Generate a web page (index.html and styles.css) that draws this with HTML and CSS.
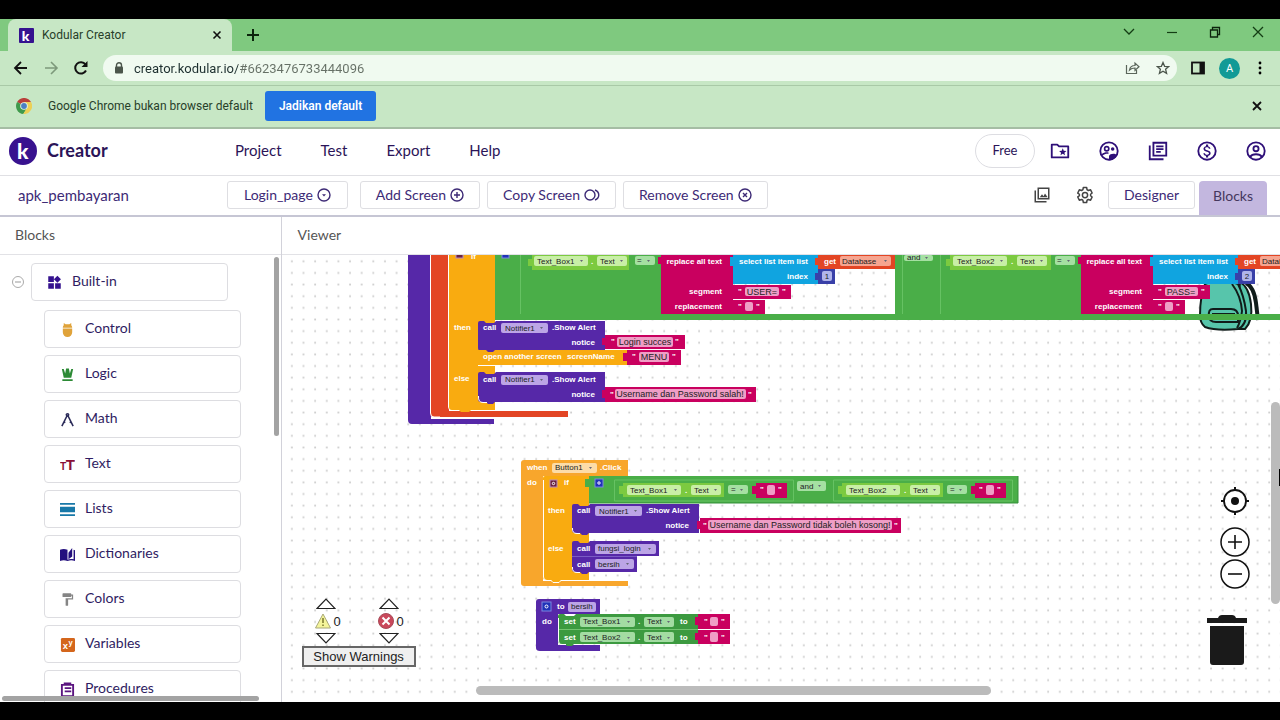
FILE: index.html
```html
<!DOCTYPE html>
<html lang="id">
<head>
    <meta charset="UTF-8">
    <meta name="viewport" content="width=device-width, initial-scale=1.0">
    <title>Kodular Creator</title>
    <link rel="stylesheet" href="styles.css">
</head>
<body>
    <!-- Browser chrome -->
    <header class="browser">
        <div class="tab-strip">
            <div class="tab">
                <svg class="favicon" viewBox="0 0 16 16"><rect width="16" height="16" rx="1" fill="#35128f"/><text x="3" y="14" class="logo-k" font-size="15">k</text></svg>
                <span class="tab-title">Kodular Creator</span>
                <button class="plain" aria-label="Close tab"><svg width="10" height="10" viewBox="0 0 10 10"><path d="M1.5 1.5l7 7m0-7l-7 7" stroke="#111" stroke-width="1.6"/></svg></button>
            </div>
            <button class="plain new-tab" aria-label="New tab"><svg width="12" height="12" viewBox="0 0 12 12"><path d="M6 0v12M0 6h12" stroke="#0b240b" stroke-width="2"/></svg></button>
            <div class="window-buttons">
                <button class="plain" aria-label="Search tabs"><svg width="12" height="12" viewBox="0 0 12 12"><path d="M1 3l5 5 5-5" fill="none" stroke="#143d14" stroke-width="1.3"/></svg></button>
                <button class="plain" aria-label="Minimize"><svg width="12" height="12" viewBox="0 0 12 12"><path d="M1 6.5h10" stroke="#143d14" stroke-width="1.2"/></svg></button>
                <button class="plain" aria-label="Restore"><svg width="12" height="12" viewBox="0 0 12 12"><path d="M1.500 4h7v7h-7zM3.500 4V1.500h7v7H8.500" fill="none" stroke="#0c240c" stroke-width="1.300"/></svg></button>
                <button class="plain" aria-label="Close"><svg width="12" height="12" viewBox="0 0 12 12"><path d="M1 1l10 10M11 1L1 11" stroke="#143d14" stroke-width="1.300"/></svg></button>
            </div>
        </div>
        <div class="toolbar">
            <button class="plain" aria-label="Back"><svg width="16" height="16" viewBox="0 0 16 16"><path d="M14 8H2.500M8 2L2 8l6 6" fill="none" stroke="#111" stroke-width="1.800"/></svg></button>
            <button class="plain" aria-label="Forward"><svg width="16" height="16" viewBox="0 0 16 16"><path d="M2 8h11.500M8 2l6 6-6 6" fill="none" stroke="#7d997b" stroke-width="1.600"/></svg></button>
            <button class="plain" aria-label="Reload"><svg width="16" height="16" viewBox="0 0 16 16"><path d="M13 10.500A5.700 5.700 0 1 1 12.500 4.500" fill="none" stroke="#111" stroke-width="2"/><path d="M14.500 1v6h-6z" fill="#111"/></svg></button>
            <div class="address-bar">
                <svg width="10" height="12" viewBox="0 0 10 12"><path d="M2.500 5V3.300a2.500 2.500 0 0 1 5 0V5" fill="none" stroke="#4b554b" stroke-width="1.400"/><rect x="1" y="4.500" width="8" height="7" rx="1" fill="#4b554b"/></svg>
                <input type="text" aria-label="Address" value="creator.kodular.io/#6623476733444096">
                <button class="plain" aria-label="Share"><svg width="16" height="14" viewBox="0 0 16 14"><path d="M1.500 4v8.500h10V9M4.500 9C5 6 7 4.500 10 4.500V2l4 3.700-4 3.600V7C7.500 7 6 7.500 4.500 9z" fill="none" stroke="#5b665b" stroke-width="1.200"/></svg></button>
                <button class="plain" aria-label="Bookmark"><svg width="14" height="14" viewBox="0 0 14 14"><path d="M7 1.500l1.600 3.800 4.100.3-3.100 2.700 1 4L7 10.200l-3.600 2.100 1-4L1.300 5.600l4.100-.3z" fill="none" stroke="#4b554b" stroke-width="1.300"/></svg></button>
            </div>
            <button class="plain" aria-label="Side panel"><svg width="14" height="14" viewBox="0 0 14 14"><rect x="1" y="1.500" width="12" height="11" fill="none" stroke="#111" stroke-width="1.800"/><path d="M8.500 1.500H13v11H8.500z" fill="#111"/></svg></button>
            <button class="plain avatar" aria-label="Profile">A</button>
            <button class="plain" aria-label="Menu"><svg width="4" height="14" viewBox="0 0 4 14"><circle cx="2" cy="2" r="1.400"/><circle cx="2" cy="7" r="1.400"/><circle cx="2" cy="12" r="1.400"/></svg></button>
        </div>
        <div class="infobar">
            <svg width="16" height="16" viewBox="0 0 16 16"><path d="M8 8L1.100 4A8 8 0 0 1 15 4z" fill="#b9403a"/><path d="M8 8L1.100 4a8 8 0 0 0 6.200 12l4-6z" fill="#3f9a4c"/><path d="M8 4h7a8 8 0 0 1-7.700 12L11.500 9z" fill="#ecd055"/><circle cx="8" cy="8" r="3.800" fill="#e8f3e6"/><circle cx="8" cy="8" r="2.900" fill="#4a80c4"/></svg>
            <span>Google Chrome bukan browser default</span>
            <button class="make-default">Jadikan default</button>
            <button class="plain dismiss" aria-label="Dismiss"><svg width="10" height="10" viewBox="0 0 10 10"><path d="M1 1l8 8m0-8l-8 8" stroke="#111" stroke-width="1.800"/></svg></button>
        </div>
    </header>

    <!-- Creator top bar -->
    <div class="top-bar">
        <svg class="logo" width="28" height="28" viewBox="0 0 28 28"><circle cx="14" cy="14" r="14" fill="#38128f"/><text x="8" y="22" class="logo-k" font-size="21">k</text></svg>
        <h1>Creator</h1>
        <nav class="menu">
            <a href="#project">Project</a>
            <a href="#test">Test</a>
            <a href="#export">Export</a>
            <a href="#help">Help</a>
        </nav>
        <div class="account">
            <button class="pill">Free</button>
            <button class="plain" aria-label="My projects"><svg width="22" height="22" viewBox="0 0 24 24"><path d="M3 5h6l2 2h10v12H3z" fill="none" stroke="#2e0f78" stroke-width="2" stroke-linejoin="round"/><path d="M15 9l1.100 2.600 2.900.3-2.200 1.900.7 2.800-2.500-1.500-2.500 1.500.7-2.800-2.200-1.900 2.900-.3z" fill="#2e0f78"/></svg></button>
            <button class="plain" aria-label="Community"><svg width="22" height="22" viewBox="0 0 24 24"><circle cx="12" cy="12" r="9.500" fill="none" stroke="#2e0f78" stroke-width="2"/><circle cx="9.500" cy="9.500" r="2.300" fill="none" stroke="#2e0f78" stroke-width="1.800"/><circle cx="16" cy="9.800" r="1.900" fill="#2e0f78"/><path d="M4 15.500c2-2 5-2.500 7.500-2v1.500c-2.500-.3-4.500.2-6.500 2zM12 22v-4.500c1-2.500 6-3.500 8.500-1-1 3-4 5.500-8.500 5.500z" fill="#2e0f78"/></svg></button>
            <button class="plain" aria-label="Documentation"><svg width="22" height="22" viewBox="0 0 24 24"><path d="M7 3h14v14H7zM3 6v15h15M10 7h8M10 10h8M10 13h5" fill="none" stroke="#2e0f78" stroke-width="2"/></svg></button>
            <button class="plain" aria-label="Earnings"><svg width="22" height="22" viewBox="0 0 24 24"><circle cx="12" cy="12" r="9.500" fill="none" stroke="#2e0f78" stroke-width="2"/><path d="M12.310 11.140c-1.770-.45-2.340-.94-2.340-1.670 0-.84.79-1.430 2.100-1.430 1.380 0 1.900.66 1.940 1.640h1.710c-.05-1.340-.87-2.570-2.490-2.970V5H10.900v1.690c-1.510.32-2.720 1.300-2.720 2.810 0 1.790 1.490 2.690 3.660 3.210 1.950.46 2.340 1.150 2.340 1.870 0 .53-.39 1.390-2.100 1.390-1.600 0-2.230-.72-2.320-1.640H8.040c.1 1.700 1.360 2.660 2.860 2.970V19h2.340v-1.670c1.520-.29 2.720-1.160 2.730-2.770-.01-2.200-1.900-2.960-3.660-3.420z" fill="#2e0f78"/></svg></button>
            <button class="plain" aria-label="Account"><svg width="22" height="22" viewBox="0 0 24 24"><circle cx="12" cy="12" r="9.500" fill="none" stroke="#2e0f78" stroke-width="2"/><circle cx="12" cy="9.500" r="2.800" fill="none" stroke="#2e0f78" stroke-width="2"/><path d="M5.500 18.500c2.500-4 10.500-4 13 0" fill="none" stroke="#2e0f78" stroke-width="2"/></svg></button>
        </div>
    </div>

    <!-- Project bar -->
    <div class="project-bar">
        <span class="project-name">apk_pembayaran</span>
        <div class="screen-actions">
            <button class="outline">Login_page <svg width="14" height="14" viewBox="0 0 14 14"><circle cx="7" cy="7" r="6"/><path d="M5 6.300h4L7 8.500z" class="solid"/></svg></button>
            <button class="outline">Add Screen <svg width="14" height="14" viewBox="0 0 14 14"><circle cx="7" cy="7" r="6"/><path d="M7 4v6M4 7h6"/></svg></button>
            <button class="outline">Copy Screen <svg width="16" height="14" viewBox="0 0 16 14"><circle cx="6" cy="7" r="5"/><path d="M11 2c5 2 5 8 0 10"/></svg></button>
            <button class="outline">Remove Screen <svg width="14" height="14" viewBox="0 0 14 14"><circle cx="7" cy="7" r="6"/><path d="M5 5l4 4m0-4L5 9"/></svg></button>
        </div>
        <div class="view-actions">
            <button class="plain" aria-label="Assets"><svg width="18" height="18" viewBox="0 0 24 24"><path d="M7 3h14v14H7zM3 6v15h15" fill="none" stroke="#444" stroke-width="2"/><path d="M9 15l3-4 2 2.500 2-3.500 3.500 5z" fill="#444"/></svg></button>
            <button class="plain" aria-label="Settings"><svg width="18" height="18" viewBox="0 0 24 24"><path d="M19.430 12.980c.04-.32.07-.64.07-.98s-.03-.66-.07-.98l2.110-1.650-2.100-4.300-3 .98c-.52-.4-1.080-.73-1.690-.98L14.200 2H9.800l-.67 3.070c-.61.25-1.170.59-1.690.98l-3-.98-2.100 4.300 2.230 1.650c-.04.32-.07.65-.07.98s.03.66.07.98l-2.230 1.650 2.100 4.300 3-.98c.52.4 1.080.73 1.690.98L9.800 22h4.400l.55-3.070c.61-.25 1.170-.59 1.690-.98l3 .98 2.100-4.300z" fill="none" stroke="#444" stroke-width="2" stroke-linejoin="round"/><circle cx="12" cy="12" r="3.500" fill="none" stroke="#444" stroke-width="2"/></svg></button>
            <button class="outline">Designer</button>
            <button class="view-tab">Blocks</button>
        </div>
    </div>

    <main class="workbench">
        <aside class="palette">
            <h2>Blocks</h2>
            <div class="tree">
                <div class="tree-root">
                    <button class="plain" aria-label="Collapse"><svg width="12" height="12" viewBox="0 0 12 12"><path d="M3 6h6" stroke="#999"/><circle cx="6" cy="6" r="5.500" fill="none" stroke="#aaa"/></svg></button>
                    <button class="drawer"><svg viewBox="0 0 24 24" fill="#35128f"><path d="M13 13v9h9v-9h-9zM2 22h9v-9H2v9zM2 2v9h9V2H2zm14.660-1L11 6.800 16.660 12.500l5.660-5.660L16.660 1z"/></svg>Built-in</button>
                </div>
                <button class="drawer"><svg viewBox="0 0 16 16" fill="#e0a33a"><path d="M3 7h10v4a5 5 0 0 1-10 0zM3 6c0-1 .5-2 1-2.500V1l2 1.500h4L12 1v2.500c.5.500 1 1.500 1 2.500z"/></svg>Control</button>
                <button class="drawer"><svg viewBox="0 0 16 16" fill="#2c8a35"><path d="M2 2h2l1.500 5L6.500 1.500h3L10.500 7 12 2h2l-2 9.500H4zM2.500 13h11v2h-11z"/></svg>Logic</button>
                <button class="drawer"><svg viewBox="0 0 16 16" fill="none" stroke="#2c2c5a" stroke-width="1.700"><path d="M2 15L7.500 4M14 15L8.500 4M4.500 10.500l1 1m6-1l-1 1"/><circle cx="8" cy="3" r="1.200"/></svg>Math</button>
                <button class="drawer"><svg viewBox="0 0 16 16" fill="#8a1038" class="type-icon"><text x="0" y="14" font-size="11">T</text><text x="6" y="14" font-size="16">T</text></svg>Text</button>
                <button class="drawer"><svg viewBox="0 0 16 16" fill="#1878a8"><path d="M0 1h16v2H0zM0 5h16v6H0zM0 13h16v2H0z"/></svg>Lists</button>
                <button class="drawer"><svg viewBox="0 0 16 16" fill="#24107e"><path d="M0 3c3-1.300 5-1.300 8 0v12c-3-1.300-5-1.300-8 0zM9 6l4-5v9l-4 3zM14.500 3l1.500.5V15c-3-1.300-5-1.300-8 0v-1.500c2-1 4-1 6.500-.5z"/></svg>Dictionaries</button>
                <button class="drawer"><svg viewBox="0 0 24 24" fill="#858585"><path d="M18 4V3c0-.55-.45-1-1-1H5c-.55 0-1 .45-1 1v4c0 .55.450 1 1 1h12c.55 0 1-.45 1-1V6h1v4H9v11c0 .55.450 1 1 1h2c.55 0 1-.45 1-1v-9h8V4h-3z"/></svg>Colors</button>
                <button class="drawer"><svg viewBox="0 0 16 16" class="type-icon"><rect x="1" y="1" width="15" height="15" rx="1.500" fill="#d4661c"/><text x="3" y="13" font-size="10" fill="#fff">x</text><text x="9" y="8" font-size="8" fill="#fff">y</text></svg>Variables</button>
                <button class="drawer"><svg viewBox="0 0 16 16" fill="none" stroke="#5b1480" stroke-width="2"><path d="M2 3h12v12H2zM5 6.500h7M5 10h7M5 3V1.500h6V3"/></svg>Procedures</button>
            </div>
            <div class="scroll-v"></div>
            <div class="scroll-h"></div>
        </aside>

        <section class="viewer">
            <h2>Viewer</h2>
            <div class="workspace">
                <svg class="canvas">
                    <defs>
                        <pattern id="grid" x="4" y="0" width="11.635" height="11.635" patternUnits="userSpaceOnUse"><rect x="5" y="5.400" width="1.800" height="1.800" fill="#cdcdcd"/></pattern>
                    </defs>
                    <rect width="100%" height="100%" fill="url(#grid)"/>

                    <g transform="translate(-282 -255)">
                        <!-- backpack -->
                        <g stroke="#101c1a" stroke-width="2" fill="#57c5ab">
                            <path d="M1246 283q8 4 10 20l2 17" fill="none" stroke-width="4"/>
                            <path d="M1240 282q9 5 11 22t-6 25h-9z"/>
                            <path d="M1205 284q15-7 33 0 6 12 8 27 1 14-8 18-22 2-33-2-5-4-5-12 0-18 5-31z"/>
                            <path d="M1232 284q9 12 10 27-1 10-5 17" fill="none"/>
                            <path d="M1209 316q-1-7 4-7h18q7 0 7 7v6h-22q-7 0-7-6zM1212 314h23" fill="none"/>
                        </g>

                        <!-- fungsi_login procedure -->
                        <path class="proc" d="M408 255H431V419H494V424H412Q408 424 408 420Z"/>
                        <path class="ctl-red" d="M430 255H449V411H568V417H434Q430 417 430 413Z"/>
                        <path class="edge" d="M430.500 255V413Q430.500 417 434 417H440M448.500 255V407Q448.500 410.500 452 410.500H458"/>
                        <path class="amber" d="M449 255H495V410H471L469 412H461L459 410H452Q449 410 449 407Z"/>
                        <path class="green" d="M495 255H661V314H895V255H1081V314H1280V320H495Z"/>
                        <path class="seam" d="M520.500 255V314M902.500 255V314M940.500 255V314"/>
                        <rect class="mutator" x="456" y="251" width="7" height="7"/>
                        <rect class="mutator blue" x="502" y="251" width="7" height="7"/>
                        <text class="label" x="471" y="259">if</text>

                        <path class="lime" d="M532 255H629V270H532V266H528V259H532Z"/>
                        <rect class="lime-field" x="534" y="256" width="54" height="10"/>
                        <rect class="lime-field" x="597" y="256" width="30" height="10"/>
                        <rect class="green-field" x="635" y="256" width="20" height="9"/>
                        <text class="field" x="537" y="264">Text_Box1</text><path class="arrow" d="M580 260h3l-1.500 2z"/>
                        <text class="label" x="591" y="264">.</text>
                        <text class="field" x="600" y="264">Text</text><path class="arrow" d="M620 260h3l-1.500 2z"/>
                        <text class="field" x="637" y="263">=</text><path class="arrow" d="M647 260h3l-1.500 2z"/>
                        <path class="pink" d="M661 255H733V314H661V264H658V257H661Z"/>
                        <text class="label end" x="722" y="264">replace all text</text>
                        <text class="label end" x="722" y="294">segment</text>
                        <text class="label end" x="722" y="309">replacement</text>
                        <path class="cyan" d="M733 255H818V284H733V266H730V257H733Z"/>
                        <text class="label" x="739" y="264">select list item</text>
                        <text class="label end" x="808" y="264">list</text>
                        <text class="label end" x="808" y="279">index</text>
                        <path class="ctl-red" d="M818 255H895V269H818V265H815V258H818Z"/>
                        <text class="label" x="824" y="264">get</text>
                        <rect class="red-field" x="840" y="256" width="51" height="10"/>
                        <text class="field" x="842" y="264">Database</text><path class="arrow" d="M884 260h3l-1.500 2z"/>
                        <path class="navy" d="M818 269H835V284H818V280H815V273H818Z"/>
                        <rect class="navy-field" x="822" y="271" width="10" height="10"/><text class="field mid" x="827" y="279">1</text>
                        <rect class="pink" x="733" y="285" width="58" height="14"/>
                        <text class="label" x="738" y="294">"</text><rect class="pink-field" x="745" y="287" width="34" height="9"/><text class="field str mid" x="762" y="295">USER=</text><text class="label" x="782" y="294">"</text>
                        <rect class="pink" x="733" y="300" width="32" height="14"/>
                        <text class="label" x="738" y="309">"</text><rect class="pink-field" x="745" y="302" width="8" height="9"/><text class="label" x="756" y="309">"</text>
                        <rect class="green-field" x="904" y="255" width="29" height="6"/>
                        <text class="field" x="907" y="260">and</text><path class="arrow" d="M925 257h3l-1.500 2z"/>

                        <path class="lime" d="M950 255H1051V270H950V266H946V259H950Z"/>
                        <rect class="lime-field" x="953" y="256" width="54" height="10"/>
                        <rect class="lime-field" x="1017" y="256" width="30" height="10"/>
                        <rect class="green-field" x="1055" y="256" width="20" height="9"/>
                        <text class="field" x="957" y="264">Text_Box2</text><path class="arrow" d="M1000 260h3l-1.500 2z"/>
                        <text class="label" x="1011" y="264">.</text>
                        <text class="field" x="1020" y="264">Text</text><path class="arrow" d="M1040 260h3l-1.500 2z"/>
                        <text class="field" x="1057" y="263">=</text><path class="arrow" d="M1067 260h3l-1.500 2z"/>
                        <path class="pink" d="M1081 255H1153V314H1081V264H1078V257H1081Z"/>
                        <text class="label end" x="1142" y="264">replace all text</text>
                        <text class="label end" x="1142" y="294">segment</text>
                        <text class="label end" x="1142" y="309">replacement</text>
                        <path class="cyan" d="M1153 255H1238V284H1153V266H1150V257H1153Z"/>
                        <text class="label" x="1159" y="264">select list item</text>
                        <text class="label end" x="1228" y="264">list</text>
                        <text class="label end" x="1228" y="279">index</text>
                        <path class="ctl-red" d="M1238 255H1315V269H1238V265H1235V258H1238Z"/>
                        <text class="label" x="1244" y="264">get</text>
                        <rect class="red-field" x="1260" y="256" width="51" height="10"/>
                        <text class="field" x="1262" y="264">Database</text>
                        <path class="navy" d="M1238 269H1255V284H1238V280H1235V273H1238Z"/>
                        <rect class="navy-field" x="1242" y="271" width="10" height="10"/><text class="field mid" x="1247" y="279">2</text>
                        <rect class="pink" x="1153" y="285" width="57" height="14"/>
                        <text class="label" x="1158" y="294">"</text><rect class="pink-field" x="1165" y="287" width="33" height="9"/><text class="field str mid" x="1181" y="295">PASS=</text><text class="label" x="1201" y="294">"</text>
                        <rect x="1185" y="299" width="12" height="15" fill="#fff"/>
                        <rect class="pink" x="1153" y="300" width="32" height="14"/>
                        <text class="label" x="1158" y="309">"</text><rect class="pink-field" x="1165" y="302" width="8" height="9"/><text class="label" x="1176" y="309">"</text>

                        <text class="label" x="454" y="330">then</text>
                        <text class="label" x="454" y="381">else</text>
                        <path class="proc" d="M478 323Q478 321 480 321H484L486 323H494L496 321H605V351H481Q478 351 478 348Z"/>
                        <text class="label" x="483" y="330">call</text>
                        <rect class="proc-field" x="501" y="323" width="47" height="10"/><text class="field" x="505" y="331">Notifier1</text><path class="arrow" d="M540 327h3l-1.500 2z"/>
                        <text class="label" x="552" y="330">.Show Alert</text>
                        <text class="label end" x="595" y="345">notice</text>
                        <path class="pink" d="M605 335H685V349H605V345H602V338H605Z"/>
                        <text class="label" x="611" y="344">"</text><rect class="pink-field" x="617" y="337" width="56" height="10"/><text class="field str mid" x="645" y="345">Login succes</text><text class="label" x="675" y="344">"</text>
                        <path class="amber" d="M478 350H627V365H481Q478 365 478 362Z"/>
                        <path class="proc" d="M486 350H495L493 352H488Z"/>
                        <text class="label" x="483" y="359">open another screen</text>
                        <text class="label" x="567" y="359">screenName</text>
                        <path class="pink" d="M627 350H681V365H627V361H623V353H627Z"/>
                        <text class="label" x="632" y="359">"</text><rect class="pink-field" x="639" y="352" width="30" height="10"/><text class="field str mid" x="654" y="360">MENU</text><text class="label" x="672" y="359">"</text>
                        <rect x="478" y="365" width="17" height="1" fill="#fff"/>
                        <path class="proc" d="M478 374Q478 372 480 372H484L486 374H494L496 372H605V402H495L493 404H488L486 402H481Q478 402 478 399Z"/>
                        <path class="edge" d="M478.500 396Q478 402.500 483 402.500H487"/>
                        <text class="label" x="483" y="382">call</text>
                        <rect class="proc-field" x="501" y="375" width="47" height="10"/><text class="field" x="505" y="382">Notifier1</text><path class="arrow" d="M540 379h3l-1.500 2z"/>
                        <text class="label" x="552" y="382">.Show Alert</text>
                        <text class="label end" x="595" y="397">notice</text>
                        <path class="pink" d="M605 387H756V402H605V398H602V390H605Z"/>
                        <text class="label" x="610" y="397">"</text><rect class="pink-field" x="615" y="389" width="131" height="10"/><text class="field str mid" x="680" y="397">Username dan Password salah!</text><text class="label" x="748" y="397">"</text>

                        <!-- when Button1.Click -->
                        <path class="event" d="M521 463Q521 460 524 460H628V476H543V581H628V586H524Q521 586 521 583Z"/>
                        <path class="amber" d="M543 478Q543 476 545 476H589V580H561L559 582H553L551 580H546Q543 580 543 577Z"/>
                        <path class="edge" d="M543.500 480V577Q543.500 580.500 547 580.500H551L553 582.500H559L561 580.500H589"/>
                        <text class="label" x="527" y="470">when</text>
                        <rect class="event-field" x="552" y="463" width="45" height="10"/><text class="field" x="555" y="470">Button1</text><path class="arrow" d="M589 467h3l-1.500 2z"/>
                        <text class="label" x="600" y="470">.Click</text>
                        <text class="label" x="527" y="485">do</text>
                        <text class="label" x="564" y="485">if</text>
                        <text class="label" x="548" y="513">then</text>
                        <text class="label" x="548" y="551">else</text>
                        <rect class="mutator" x="550" y="480" width="7" height="7"/><circle cx="553.500" cy="483.500" r="1.200" fill="none" stroke="#fff"/>

                        <path class="green" d="M589 476H1018V503H589V487H585V479H589Z"/>
                        <path class="shade" d="M1018 476V503H589"/>
                        <rect class="mutator blue" x="595" y="479" width="8" height="8"/><circle cx="599" cy="483" r="1.200" fill="none" stroke="#fff"/>
                        <path class="seam" d="M614.500 480H793.500V501H614.500ZM833.500 480H1012.500V501H833.500Z"/>
                        <path class="lime" d="M623 483H724V497H623V494H619V486H623Z"/>
                        <rect class="lime-field" x="627" y="485" width="54" height="10"/><text class="field" x="630" y="493">Text_Box1</text><path class="arrow" d="M674 489h3l-1.500 2z"/>
                        <text class="label" x="685" y="493">.</text>
                        <rect class="lime-field" x="691" y="485" width="30" height="10"/><text class="field" x="694" y="493">Text</text><path class="arrow" d="M714 489h3l-1.500 2z"/>
                        <rect class="green-field" x="728" y="485" width="20" height="9"/><text class="field" x="731" y="492">=</text><path class="arrow" d="M740 489h3l-1.500 2z"/>
                        <path class="pink" d="M756 483H787V498H756V494H752V486H756Z"/>
                        <text class="label" x="760" y="492">"</text><rect class="pink-field" x="767" y="485" width="8" height="10"/><text class="label" x="778" y="492">"</text>
                        <rect class="green-field" x="797" y="481" width="29" height="10"/><text class="field" x="800" y="489">and</text><path class="arrow" d="M818 485h3l-1.500 2z"/>
                        <path class="lime" d="M842 483H943V497H842V494H838V486H842Z"/>
                        <rect class="lime-field" x="846" y="485" width="54" height="10"/><text class="field" x="849" y="493">Text_Box2</text><path class="arrow" d="M893 489h3l-1.500 2z"/>
                        <text class="label" x="904" y="493">.</text>
                        <rect class="lime-field" x="910" y="485" width="30" height="10"/><text class="field" x="913" y="493">Text</text><path class="arrow" d="M933 489h3l-1.500 2z"/>
                        <rect class="green-field" x="947" y="485" width="20" height="9"/><text class="field" x="950" y="492">=</text><path class="arrow" d="M959 489h3l-1.500 2z"/>
                        <path class="pink" d="M975 483H1006V498H975V494H971V486H975Z"/>
                        <text class="label" x="979" y="492">"</text><rect class="pink-field" x="986" y="485" width="8" height="10"/><text class="label" x="997" y="492">"</text>

                        <path class="proc" d="M572 506Q572 504 574 504H578L580 506H588L590 504H699V533H589L587 535H582L580 533H575Q572 533 572 530Z"/>
                        <path class="edge" d="M572.500 528Q572 533.500 577 533.500H580"/>
                        <text class="label" x="577" y="513">call</text>
                        <rect class="proc-field" x="595" y="506" width="47" height="10"/><text class="field" x="599" y="514">Notifier1</text><path class="arrow" d="M634 510h3l-1.500 2z"/>
                        <text class="label" x="646" y="513">.Show Alert</text>
                        <text class="label end" x="689" y="528">notice</text>
                        <path class="pink" d="M700 518H901V533H700V529H697V521H700Z"/>
                        <text class="label" x="703" y="528">"</text><rect class="pink-field" x="708" y="520" width="184" height="10"/><text class="field str mid" x="800" y="528">Username dan Password tidak boleh kosong!</text><text class="label" x="894" y="528">"</text>
                        <path class="proc" d="M572 543Q572 541 574 541H578L580 543H588L590 541H659V556H637V572H589L587 574H582L580 572H575Q572 572 572 569Z"/>
                        <path class="edge" d="M572.500 567Q572 572.500 577 572.500H580"/>
                        <path d="M572 556.500H637" stroke="#7a5cc4"/>
                        <text class="label" x="577" y="551">call</text>
                        <rect class="proc-field" x="595" y="544" width="61" height="10"/><text class="field" x="598" y="551">fungsi_login</text><path class="arrow" d="M648 548h3l-1.500 2z"/>
                        <text class="label" x="577" y="567">call</text>
                        <rect class="proc-field" x="595" y="559" width="39" height="10"/><text class="field" x="598" y="567">bersih</text><path class="arrow" d="M626 563h3l-1.500 2z"/>

                        <!-- to bersih -->
                        <path class="proc" d="M536 602Q536 599 539 599H600V614H558V645H600V651H540Q536 651 536 648Z"/>
                        <rect class="mutator blue" x="542" y="602" width="9" height="9"/><circle cx="546.500" cy="606.500" r="1.500" fill="none" stroke="#fff"/>
                        <text class="label" x="557" y="609">to</text>
                        <rect class="proc-field" x="568" y="602" width="28" height="10"/><text class="field" x="571" y="609">bersih</text>
                        <text class="label" x="542" y="624">do</text>
                        <path class="set-green" d="M558 616Q558 614 560 614H564L566 616H574L576 614H698V644H574L572 646H567L565 644H561Q558 644 558 641Z"/>
                        <path class="edge" d="M558.500 618V640Q558.500 644.500 562 644.500H566"/>
                        <path d="M559 629.500H698" stroke="#73c470"/>
                        <text class="label" x="564" y="624">set</text>
                        <rect class="set-field" x="580" y="617" width="55" height="10"/><text class="field" x="583" y="624">Text_Box1</text><path class="arrow" d="M627 621h3l-1.500 2z"/>
                        <text class="label" x="638" y="624">.</text>
                        <rect class="set-field" x="644" y="617" width="30" height="10"/><text class="field" x="647" y="624">Text</text><path class="arrow" d="M667 621h3l-1.500 2z"/>
                        <text class="label" x="680" y="624">to</text>
                        <path class="pink" d="M698 614H730V629H698V625H695V617H698Z"/>
                        <text class="label" x="704" y="624">"</text><rect class="pink-field" x="710" y="617" width="8" height="9"/><text class="label" x="721" y="624">"</text>
                        <text class="label" x="564" y="640">set</text>
                        <rect class="set-field" x="580" y="632" width="55" height="10"/><text class="field" x="583" y="640">Text_Box2</text><path class="arrow" d="M627 637h3l-1.500 2z"/>
                        <text class="label" x="638" y="640">.</text>
                        <rect class="set-field" x="644" y="632" width="30" height="10"/><text class="field" x="647" y="640">Text</text><path class="arrow" d="M667 637h3l-1.500 2z"/>
                        <text class="label" x="680" y="640">to</text>
                        <path class="pink" d="M698 630H730V644H698V640H695V633H698Z"/>
                        <text class="label" x="704" y="640">"</text><rect class="pink-field" x="710" y="632" width="8" height="10"/><text class="label" x="721" y="640">"</text>
                    </g>
                </svg>

                <div class="warnings">
                    <div class="counters">
                        <div class="counter">
                            <button class="plain" aria-label="Previous warning"><svg width="20" height="11" viewBox="0 0 20 11"><path d="M1 10.500L10 1l9 9.500z" fill="#fff" stroke="#222" stroke-width="1.200"/></svg></button>
                            <span><svg width="16" height="16" viewBox="0 0 16 16"><path d="M8 1l7.500 14H.5z" fill="#f4f49a" stroke="#a8a878"/><path d="M8 5v5m0 1.500V13" stroke="#77772e" stroke-width="1.500"/></svg>0</span>
                            <button class="plain" aria-label="Next warning"><svg width="20" height="11" viewBox="0 0 20 11"><path d="M1 .5L10 10l9-9.500z" fill="#fff" stroke="#222" stroke-width="1.200"/></svg></button>
                        </div>
                        <div class="counter">
                            <button class="plain" aria-label="Previous error"><svg width="20" height="11" viewBox="0 0 20 11"><path d="M1 10.500L10 1l9 9.500z" fill="#fff" stroke="#222" stroke-width="1.200"/></svg></button>
                            <span><svg width="16" height="16" viewBox="0 0 16 16"><circle cx="8" cy="8" r="7.500" fill="#c9485b" stroke="#a84a58"/><path d="M4.500 4.500l7 7m0-7l-7 7" stroke="#fff" stroke-width="2"/></svg>0</span>
                            <button class="plain" aria-label="Next error"><svg width="20" height="11" viewBox="0 0 20 11"><path d="M1 .5L10 10l9-9.500z" fill="#fff" stroke="#222" stroke-width="1.200"/></svg></button>
                        </div>
                    </div>
                    <button class="show-warnings">Show Warnings</button>
                </div>

                <div class="zoom-controls">
                    <button class="plain center" aria-label="Center"><svg width="30" height="30" viewBox="0 0 30 30"><circle cx="15" cy="15" r="11" fill="#fff" stroke="#111" stroke-width="1.800"/><circle cx="15" cy="15" r="4" fill="#111"/><path d="M15 1v4M15 25v4M1 15h4M25 15h4" stroke="#111" stroke-width="2"/></svg></button>
                    <button class="plain" aria-label="Zoom in"><svg width="30" height="30" viewBox="0 0 30 30"><circle cx="15" cy="15" r="14" fill="#fff" stroke="#111" stroke-width="1.500"/><path d="M15 8v14M8 15h14" stroke="#111" stroke-width="1.600"/></svg></button>
                    <button class="plain" aria-label="Zoom out"><svg width="30" height="30" viewBox="0 0 30 30"><circle cx="15" cy="15" r="14" fill="#fff" stroke="#111" stroke-width="1.500"/><path d="M8 15h14" stroke="#111" stroke-width="1.600"/></svg></button>
                </div>
                <svg class="trash" width="40" height="52" viewBox="0 0 40 52" fill="#1a1a1a"><path d="M0 4h11q1-3 4-3h10q3 0 4 3h11v5H0zM3 12h34v36q0 3-3 3H6q-3 0-3-3z"/></svg>
                <div class="scroll-v"></div>
                <div class="scroll-h"></div>
                <div class="pointer"></div>
            </div>
        </section>
    </main>
</body>
</html>
```
FILE: styles.css
```css
* {
    box-sizing: border-box;
}
body {
    display: flex;
    flex-direction: column;
    height: 100vh;
    margin: 0;
    padding: 19px 0 18px;
    background: #000;
    font-family: Lato, sans-serif;
    overflow: hidden;
}
button {
    font: inherit;
    cursor: pointer;
}
svg {
    flex: none;
    display: block;
}
.plain {
    display: flex;
    align-items: center;
    justify-content: center;
    padding: 0;
    border: none;
    background: none;
}
.logo-k {
    fill: #fff;
    font-family: Lato, sans-serif;
    font-weight: 900;
}

/* Browser */
.browser {
    flex: none;
    background: #c7e7c5;
    font-family: Roboto, sans-serif;
    font-size: 12px;
    color: #27402a;
}
.tab-strip {
    display: flex;
    height: 32px;
    padding-left: 8px;
    background: #7fc97f;
}
.tab {
    display: flex;
    align-items: center;
    gap: 8px;
    width: 224px;
    padding: 0 10px 0 11px;
    background: #c7e7c5;
    border-radius: 8px 8px 0 0;
}
.favicon {
    width: 15px;
    height: 15px;
}
.tab-title {
    flex: 1;
}
.new-tab {
    width: 42px;
}
.window-buttons {
    display: flex;
    gap: 31px;
    margin-left: auto;
    padding: 0 16px 6px 0;
}
.toolbar {
    display: flex;
    align-items: center;
    gap: 14px;
    height: 35px;
    padding: 0 18px 0 13px;
    border-bottom: 1px solid #a9c9a7;
}
.address-bar {
    flex: 1;
    display: flex;
    align-items: center;
    gap: 15px;
    height: 26px;
    padding: 0 7px 0 11px;
    border-radius: 13px;
    background: #f0faf0;
}
.address-bar input {
    flex: 1;
    min-width: 0;
    margin-left: -5px;
    padding: 0;
    border: none;
    outline: none;
    font: 13px Roboto, sans-serif;
    /* host is darker than the path */
    color: transparent;
    caret-color: #1d2f2f;
    background: linear-gradient(90deg, #1d2f2f 104px, #667066 104px);
    background-clip: text;
    -webkit-background-clip: text;
}
.avatar {
    width: 21px;
    height: 21px;
    margin-right: 4px;
    border-radius: 50%;
    background: #129a96;
    color: #fff;
    font-size: 11px;
}
.infobar {
    display: flex;
    align-items: center;
    height: 43px;
    padding: 0 18px 2px 16px;
    border-bottom: 2px solid #a5bda4;
}
.infobar span {
    margin: 0 12px 0 16px;
}
.make-default {
    height: 30px;
    padding: 0 14px;
    border: none;
    border-radius: 3px;
    background: #2173e2;
    color: #fff;
    font-size: 12px;
    font-weight: 600;
}
.dismiss {
    margin-left: auto;
}

/* Creator header */
.top-bar {
    flex: none;
    display: flex;
    align-items: center;
    height: 47px;
    padding: 0 13px 2px 9px;
    border-bottom: 1px solid #e0e0e4;
    background: #fff;
    color: #2b1458;
    font-size: 15px;
}
.top-bar h1 {
    width: 188px;
    margin: 0 0 0 10px;
    padding-bottom: 2px;
    font-size: 18px;
    font-weight: 700;
}
.menu {
    display: flex;
    gap: 39px;
    padding-bottom: 2px;
}
.menu a {
    color: inherit;
    text-decoration: none;
}
.account {
    display: flex;
    align-items: center;
    gap: 27px;
    margin-left: auto;
}
.pill {
    width: 60px;
    height: 34px;
    margin-right: -13px;
    padding-bottom: 3px;
    border: 1px solid #dddde2;
    border-radius: 17px;
    background: #fff;
    color: #2b1458;
    font-size: 13px;
}
.project-bar {
    flex: none;
    display: flex;
    align-items: center;
    height: 41px;
    padding: 0 13px 2px 18px;
    border-bottom: 2px solid #c6c6d4;
    background: #fff;
    color: #3d2a76;
    font-size: 14px;
}
.project-name {
    width: 209px;
    font-size: 15px;
}
.screen-actions {
    display: flex;
    gap: 7px;
}
.screen-actions .outline:first-child {
    margin-right: 5px;
    padding: 0 16px;
}
.outline {
    display: flex;
    align-items: center;
    gap: 4px;
    height: 28px;
    padding: 0 15px;
    border: 1px solid #dedee2;
    border-radius: 3px;
    background: #fff;
    color: #3d2a76;
    white-space: nowrap;
}
.outline svg {
    fill: none;
    stroke: #3d2a76;
    stroke-width: 1.4;
}
.outline .solid {
    fill: #3d2a76;
    stroke: none;
}
.view-actions {
    display: flex;
    align-items: center;
    align-self: stretch;
    margin-left: auto;
}
.view-actions .plain {
    margin-right: 25px;
}
.view-actions .plain + .plain {
    margin-right: 14px;
}
.view-tab {
    align-self: flex-end;
    height: 34px;
    margin: 0 0 -2px 4px;
    padding: 0 14px 6px;
    border: none;
    border-radius: 4px 4px 0 0;
    background: #c3b7df;
    color: #45375e;
}

/* Panels */
.workbench {
    flex: 1;
    min-height: 0;
    display: flex;
    background: #fff;
}
.workbench h2 {
    height: 38px;
    margin: 0;
    padding-left: 15px;
    border-bottom: 1px solid #e2e2e6;
    color: #555;
    font-size: 14px;
    font-weight: 400;
    line-height: 35px;
}
.palette {
    position: relative;
    width: 22%;
    border-right: 1px solid #d2d2da;
    overflow: hidden;
}
.tree {
    display: flex;
    flex-direction: column;
    gap: 7px;
    padding: 8px 40px 0 44px;
}
.tree-root {
    display: flex;
    gap: 7px;
    margin: 0 13px 2px -32px;
}
.tree-root .drawer {
    flex: 1;
}
.drawer {
    display: flex;
    align-items: center;
    gap: 10px;
    height: 38px;
    padding: 0 15px 4px;
    border: 1px solid #dddde1;
    border-radius: 4px;
    background: #fff;
    color: #2f1c62;
    font-size: 14px;
}
.drawer svg {
    width: 15px;
    height: 15px;
    margin-top: 5px;
}
.type-icon {
    font-family: "Liberation Sans", sans-serif;
    font-weight: 700;
}
.viewer {
    flex: 1;
    display: flex;
    flex-direction: column;
    min-width: 0;
}
.viewer h2 {
    padding-left: 16px;
}
.workspace {
    flex: 1;
    position: relative;
    overflow: hidden;
}
.canvas {
    position: absolute;
    width: 100%;
    height: 100%;
}

/* Scrollbars lie over the content */
.scroll-v,
.scroll-h {
    position: absolute;
    border-radius: 5px;
    background: #bbb;
}
.palette .scroll-v {
    top: 40px;
    right: 2px;
    width: 5px;
    height: 179px;
    background: #a3a3a3;
}
.palette .scroll-h {
    left: 2px;
    bottom: 1px;
    width: 257px;
    height: 5px;
    background: #a3a3a3;
}
.workspace .scroll-v {
    top: 147px;
    right: 0;
    width: 9px;
    height: 202px;
}
.workspace .scroll-h {
    left: 194px;
    bottom: 7px;
    width: 515px;
    height: 9px;
}
.pointer {
    position: absolute;
    top: 214px;
    right: 0;
    width: 1px;
    height: 17px;
    background: #000;
}

/* Block colours */
.proc { fill: #5628a8; }
.ctl-red { fill: #e34524; }
.amber { fill: #f9ab10; }
.event { fill: #f8a62c; }
.green { fill: #4aae48; }
.set-green { fill: #3c9a40; }
.lime { fill: #7cca40; }
.pink { fill: #c9005f; }
.cyan { fill: #10a4e0; }
.navy { fill: #3940a8; }
.proc-field { fill: #bca5e6; }
.lime-field { fill: #c8efa6; }
.green-field { fill: #a5e0a2; }
.set-field { fill: #a3dca2; }
.pink-field { fill: #ef9ec6; }
.red-field { fill: #f6a590; }
.navy-field { fill: #b0b4ea; }
.event-field { fill: #fcdca8; }
.mutator { fill: #6a2340; stroke: #b98ac0; }
.mutator.blue { fill: #2032b8; stroke: #7b88e0; }
.edge { fill: none; stroke: #fff; stroke-width: 1; }
.seam { fill: none; stroke: #66c263; stroke-width: 1; }
.shade { fill: none; stroke: #35903a; stroke-width: 1; }
.arrow { fill: #667; }
.canvas rect[class$="-field"] { rx: 2px; }
.label {
    fill: #fff;
    font: bold 8px "Liberation Sans", sans-serif;
}
.field {
    fill: #222;
    font: 8px "Liberation Sans", sans-serif;
}
.str { font-size: 9px; }
.end { text-anchor: end; }
.mid { text-anchor: middle; }

/* Overlays on the canvas */
.warnings {
    position: absolute;
    left: 20px;
    bottom: 35px;
    width: 114px;
    font: 13px "Liberation Sans", sans-serif;
    color: #222;
}
.counters {
    display: flex;
    justify-content: space-between;
    padding: 0 8px 2px 13px;
}
.counter {
    display: flex;
    flex-direction: column;
    gap: 4px;
    width: 30px;
}
.counter button {
    width: 22px;
}
.counter span {
    display: flex;
    align-items: center;
    gap: 3px;
    height: 16px;
}
.show-warnings {
    width: 100%;
    height: 21px;
    padding: 0;
    border: 2px solid #666;
    background: #efefef;
    color: #222;
}
.zoom-controls {
    position: absolute;
    right: 30px;
    bottom: 113px;
    display: flex;
    flex-direction: column;
    gap: 2px;
}
.zoom-controls .center {
    margin-bottom: 9px;
}
.trash {
    position: absolute;
    right: 33px;
    bottom: 36px;
}
```
